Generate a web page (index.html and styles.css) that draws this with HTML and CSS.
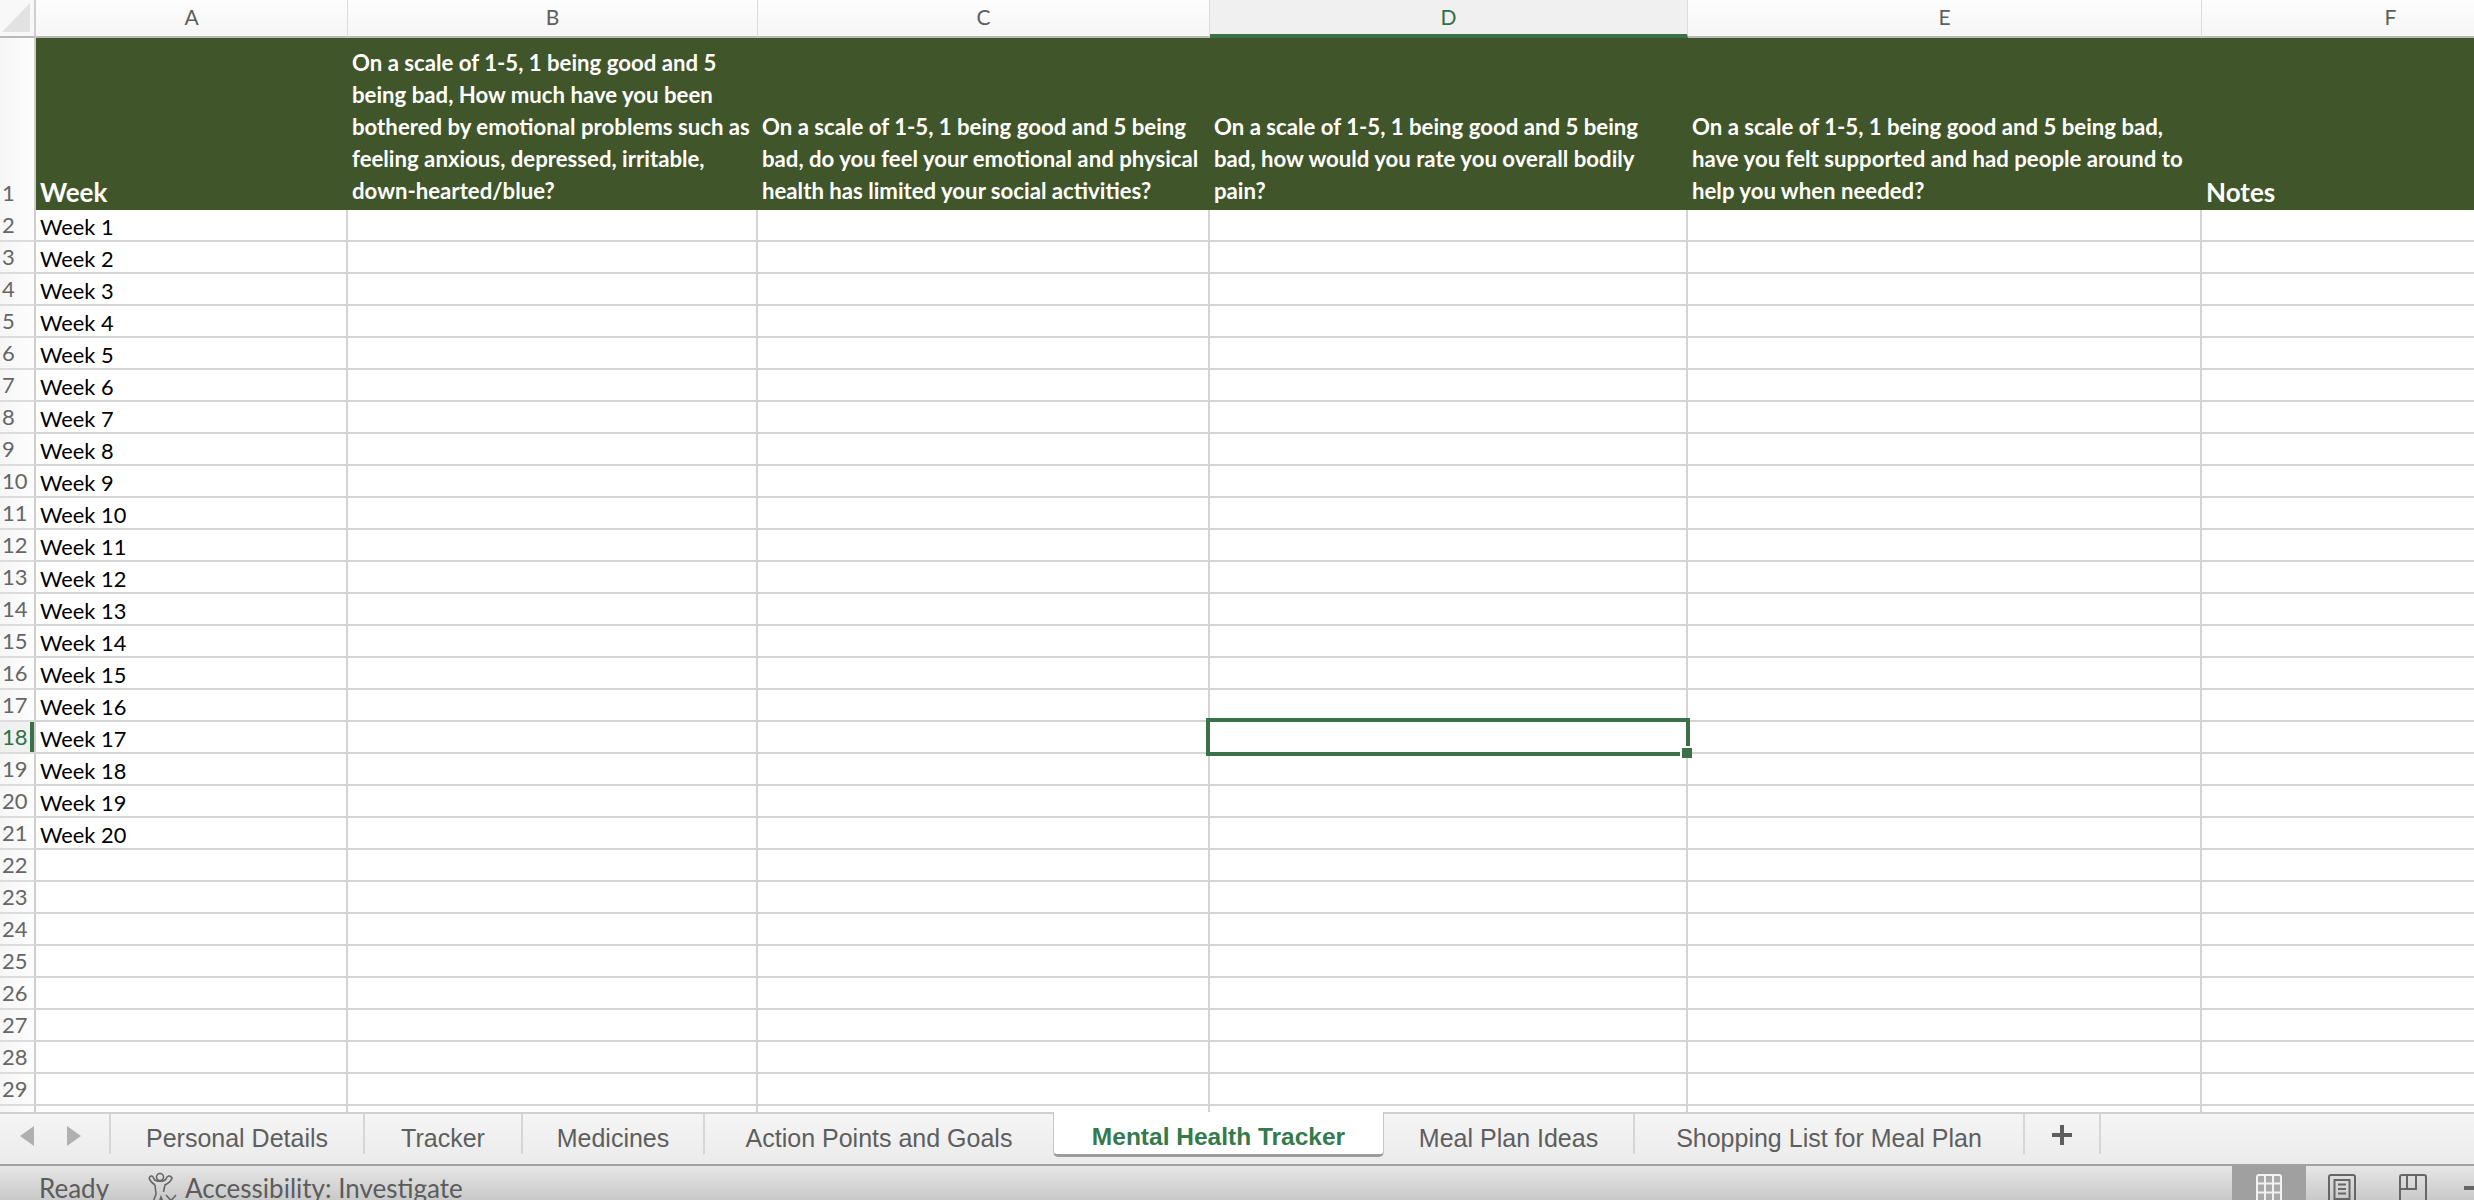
FILE: index.html
```html
<!DOCTYPE html>
<html lang="en">
<head>
<meta charset="utf-8">
<title>Mental Health Tracker</title>
<link rel="stylesheet" href="styles.css">
</head>
<body>
<div class="app">
  <div class="sheet">
    <table class="grid">
      <colgroup><col class="w0"><col class="wa"><col class="wb"><col class="wc"><col class="wd"><col class="we"><col class="wf"></colgroup>
      <thead>
        <tr>
          <th class="corner"><svg class="corner-icon" viewBox="0 0 34 36"><path d="M2 32 L30 32 L30 3 Z"/></svg></th>
          <th class="col">A</th><th class="col">B</th><th class="col">C</th><th class="col col-on">D</th><th class="col">E</th><th class="col">F</th>
        </tr>
      </thead>
      <tbody>
        <tr class="head">
          <th class="rh">1</th>
          <td class="big">Week</td>
          <td>On a scale of 1-5, 1 being good and 5<br>being bad, How much have you been<br>bothered by emotional problems such as<br>feeling anxious, depressed, irritable,<br>down-hearted/blue?</td>
          <td>On a scale of 1-5, 1 being good and 5 being<br>bad, do you feel your emotional and physical<br>health has limited your social activities?</td>
          <td>On a scale of 1-5, 1 being good and 5 being<br>bad, how would you rate you overall bodily<br>pain?</td>
          <td>On a scale of 1-5, 1 being good and 5 being bad,<br>have you felt supported and had people around to<br>help you when needed?</td>
          <td class="big">Notes</td>
        </tr>
        <tr><th class="rh">2</th><td>Week 1</td><td></td><td></td><td></td><td></td><td></td></tr>
        <tr><th class="rh">3</th><td>Week 2</td><td></td><td></td><td></td><td></td><td></td></tr>
        <tr><th class="rh">4</th><td>Week 3</td><td></td><td></td><td></td><td></td><td></td></tr>
        <tr><th class="rh">5</th><td>Week 4</td><td></td><td></td><td></td><td></td><td></td></tr>
        <tr><th class="rh">6</th><td>Week 5</td><td></td><td></td><td></td><td></td><td></td></tr>
        <tr><th class="rh">7</th><td>Week 6</td><td></td><td></td><td></td><td></td><td></td></tr>
        <tr><th class="rh">8</th><td>Week 7</td><td></td><td></td><td></td><td></td><td></td></tr>
        <tr><th class="rh">9</th><td>Week 8</td><td></td><td></td><td></td><td></td><td></td></tr>
        <tr><th class="rh">10</th><td>Week 9</td><td></td><td></td><td></td><td></td><td></td></tr>
        <tr><th class="rh">11</th><td>Week 10</td><td></td><td></td><td></td><td></td><td></td></tr>
        <tr><th class="rh">12</th><td>Week 11</td><td></td><td></td><td></td><td></td><td></td></tr>
        <tr><th class="rh">13</th><td>Week 12</td><td></td><td></td><td></td><td></td><td></td></tr>
        <tr><th class="rh">14</th><td>Week 13</td><td></td><td></td><td></td><td></td><td></td></tr>
        <tr><th class="rh">15</th><td>Week 14</td><td></td><td></td><td></td><td></td><td></td></tr>
        <tr><th class="rh">16</th><td>Week 15</td><td></td><td></td><td></td><td></td><td></td></tr>
        <tr><th class="rh">17</th><td>Week 16</td><td></td><td></td><td></td><td></td><td></td></tr>
        <tr><th class="rh rh-on">18</th><td>Week 17</td><td></td><td></td><td class="sel"><span class="sel-box"></span><span class="sel-handle"></span></td><td></td><td></td></tr>
        <tr><th class="rh">19</th><td>Week 18</td><td></td><td></td><td></td><td></td><td></td></tr>
        <tr><th class="rh">20</th><td>Week 19</td><td></td><td></td><td></td><td></td><td></td></tr>
        <tr><th class="rh">21</th><td>Week 20</td><td></td><td></td><td></td><td></td><td></td></tr>
        <tr><th class="rh">22</th><td></td><td></td><td></td><td></td><td></td><td></td></tr>
        <tr><th class="rh">23</th><td></td><td></td><td></td><td></td><td></td><td></td></tr>
        <tr><th class="rh">24</th><td></td><td></td><td></td><td></td><td></td><td></td></tr>
        <tr><th class="rh">25</th><td></td><td></td><td></td><td></td><td></td><td></td></tr>
        <tr><th class="rh">26</th><td></td><td></td><td></td><td></td><td></td><td></td></tr>
        <tr><th class="rh">27</th><td></td><td></td><td></td><td></td><td></td><td></td></tr>
        <tr><th class="rh">28</th><td></td><td></td><td></td><td></td><td></td><td></td></tr>
        <tr><th class="rh">29</th><td></td><td></td><td></td><td></td><td></td><td></td></tr>
        <tr><th class="rh"></th><td></td><td></td><td></td><td></td><td></td><td></td></tr>
      </tbody>
    </table>
  </div>
  <div class="tabbar">
    <div class="nav">
      <svg class="arrow" viewBox="0 0 16 20"><path d="M15 0 V20 L1 10 Z"/></svg>
      <svg class="arrow" viewBox="0 0 16 20"><path d="M1 0 V20 L15 10 Z"/></svg>
    </div>
    <div class="tab tab-personal">Personal Details</div>
    <div class="tab tab-tracker">Tracker</div>
    <div class="tab tab-medicines">Medicines</div>
    <div class="tab tab-action">Action Points and Goals</div>
    <div class="tab tab-active">Mental Health Tracker</div>
    <div class="tab tab-meal">Meal Plan Ideas</div>
    <div class="tab tab-shopping">Shopping List for Meal Plan</div>
    <div class="tab tab-add"><svg class="plus" viewBox="0 0 20 20"><path d="M8 0 H12 V8 H20 V12 H12 V20 H8 V12 H0 V8 H8 Z"/></svg></div>
  </div>
  <div class="status">
    <span class="ready">Ready</span>
    <svg class="a11y" viewBox="0 0 30 34" fill="none" stroke="#666" stroke-width="1.6">
      <circle cx="12" cy="5" r="3.500"/>
      <path d="M1 6 C3 2.500 5 4 6 7 C8 10 16 10 18 7 C19 4 22 2.500 24 6 C23 10 19 12 17 13 L15.500 20 M7 13 C4 11 2 9 1 6 M7 13 L8 22 L4 33 M10 34 L13 25 L15 30"/>
      <path d="M18 23 L28 34 M28 23 L18 34"/>
    </svg>
    <span class="a11y-text">Accessibility: Investigate</span>
    <div class="views">
      <div class="view view-on">
        <svg class="view-icon view-grid" viewBox="0 0 26 28"><rect x="1" y="1" width="24" height="27" rx="2" fill="#a9a9a9" stroke="#f2f2f2" stroke-width="2"/><path d="M9 0 V28 M17 0 V28 M0 9.500 H26 M0 18.500 H26" stroke="#f2f2f2" stroke-width="2"/></svg>
      </div>
      <div class="view">
        <svg class="view-icon" viewBox="0 0 28 28" fill="none" stroke="#666" stroke-width="2"><rect x="1" y="1" width="26" height="28" rx="2"/><rect x="6.500" y="6" width="15" height="19"/><path d="M10 10.500 H18 M10 15 H18 M10 19.500 H18"/></svg>
      </div>
      <div class="view">
        <svg class="view-icon" viewBox="0 0 28 28" fill="none" stroke="#666" stroke-width="2"><rect x="1" y="1" width="26" height="28" rx="2"/><path d="M1 15 H17 V1 M8 1 V15"/></svg>
      </div>
      <span class="minus"></span>
    </div>
  </div>
</div>
</body>
</html>
```

FILE: styles.css
```css
* { box-sizing: border-box; }
html, body { margin: 0; padding: 0; height: 100%; overflow: hidden; background: #fff; }
.app { width: 2474px; height: 1200px; display: flex; flex-direction: column; overflow: hidden; }
.sheet { height: 1112px; overflow: hidden; flex: none; }

.grid { table-layout: fixed; border-collapse: separate; border-spacing: 0; width: 2580px; font-family: "Lato", sans-serif; }
.w0 { width: 36px; } .wa { width: 312px; } .wb { width: 410px; } .wc { width: 452px; }
.wd { width: 478px; } .we { width: 514px; } .wf { width: 378px; }

thead th { height: 38px; padding: 0 0 4px 0; font-weight: 400; font-size: 21px; color: #5e5e5e; background: linear-gradient(#fdfdfd, #f6f6f6); border-bottom: 2px solid #b9b9b9; border-right: 1px solid #dcdcdc; vertical-align: middle; }
thead th.corner { position: relative; padding: 0; background: #f8f8f8; border-right: 2px solid #cfcfcf; }
.corner-icon { display: block; width: 34px; height: 36px; fill: #e2e2e2; }
thead th.col-on { background: #f0f0f0; color: #2f7045; padding-bottom: 2px; border-bottom: 4px solid #3b7149; }

tbody th, tbody td { height: 32px; padding: 0; overflow: hidden; white-space: nowrap; }
.rh { font-weight: 400; font-size: 22px; color: #666; background: linear-gradient(90deg, #f6f6f6, #fdfdfd); border-right: 2px solid #cfcfcf; border-bottom: 2px solid #dcdcdc; text-align: left; line-height: 27px; vertical-align: bottom; }
tbody th.rh { padding: 1px 0 2px 2px; }
tbody td { font-size: 21.800px; line-height: 27px; color: #000; padding: 3px 0 0 4px; border-right: 2px solid #d4d4d4; border-bottom: 2px solid #d4d4d4; vertical-align: bottom; }
tbody th.rh-on { color: #2f7045; background: linear-gradient(90deg, #eef0ee, #f2f2f2); box-shadow: inset -4px 0 0 #3b7149; }

.head { height: 172px; }
tbody .head th.rh { border-bottom: none; height: 172px; padding-bottom: 4px; }
tbody .head td { height: 172px; background: #40552a; color: #fff; font-weight: 700; font-size: 22.200px; line-height: 32px; border: none; padding: 0 0 3px 4px; vertical-align: bottom; }
tbody .head td.big { font-size: 26px; line-height: 36px; padding-bottom: 0; }

tbody td.sel { position: relative; overflow: visible; }
.sel-box { position: absolute; left: -4px; top: -4px; width: 484px; height: 38px; border: 4px solid #3b7149; }
.sel-handle { position: absolute; left: 472px; top: 26px; width: 10px; height: 10px; background: #3b7149; box-shadow: -2px -2px 0 0 #fff; }

.tabbar { height: 54px; flex: none; display: flex; align-items: flex-start; background: linear-gradient(#f5f5f5, #ebebeb); border-top: 2px solid #d0d0d0; border-bottom: 2px solid #a2a2a2; font-family: "Liberation Sans", sans-serif; font-size: 25px; color: #5e5e5e; }
.nav { width: 111px; height: 40px; display: flex; align-items: center; gap: 31px; padding-left: 19px; padding-top: 4px; border-right: 2px solid #d6d6d6; flex: none; }
.arrow { width: 16px; height: 20px; fill: #b0b0b0; }
.tab { height: 40px; flex: none; display: flex; align-items: center; justify-content: center; padding-top: 8px; border-right: 2px solid #d6d6d6; white-space: nowrap; }
.tab-personal { width: 254px; } .tab-tracker { width: 158px; } .tab-medicines { width: 182px; } .tab-action { width: 348px; border-right: none; }
.tab-active { width: 331px; height: 45px; margin-top: -2px; padding-top: 7px; background: #fff; color: #357a4c; font-weight: 700; font-size: 24.500px; border: 1px solid #c6c6c6; border-top: none; border-bottom: 3px solid #9c9c9c; border-radius: 0 0 5px 5px; }
.tab-meal { width: 251px; } .tab-shopping { width: 390px; } .tab-add { width: 76px; padding-top: 2px; padding-right: 0; }
.plus { width: 20px; height: 20px; fill: #5e5e5e; }

.status { height: 34px; flex: none; display: flex; align-items: flex-start; background: linear-gradient(#e6e6e6, #c9c9c9); font-family: "Lato", sans-serif; font-size: 26px; color: #5c5c5c; padding-left: 39px; line-height: 24px; overflow: hidden; }
.ready { width: 109px; flex: none; white-space: nowrap; padding-top: 10px; }
.a11y { width: 30px; height: 34px; flex: none; margin-top: 6px; }
.a11y-text { margin-left: 7px; white-space: nowrap; padding-top: 10px; }
.views { margin-left: auto; display: flex; height: 34px; }
.view { width: 71px; height: 34px; display: flex; justify-content: center; padding-top: 8px; flex: none; }
.view-on { width: 74px; background: #a0a0a0; }
.view-icon { width: 28px; height: 28px; flex: none; overflow: visible; }
.view-grid { width: 26px; }
.minus { width: 10px; height: 4px; margin: 20px 0 0 16px; background: #666; flex: none; }
```
